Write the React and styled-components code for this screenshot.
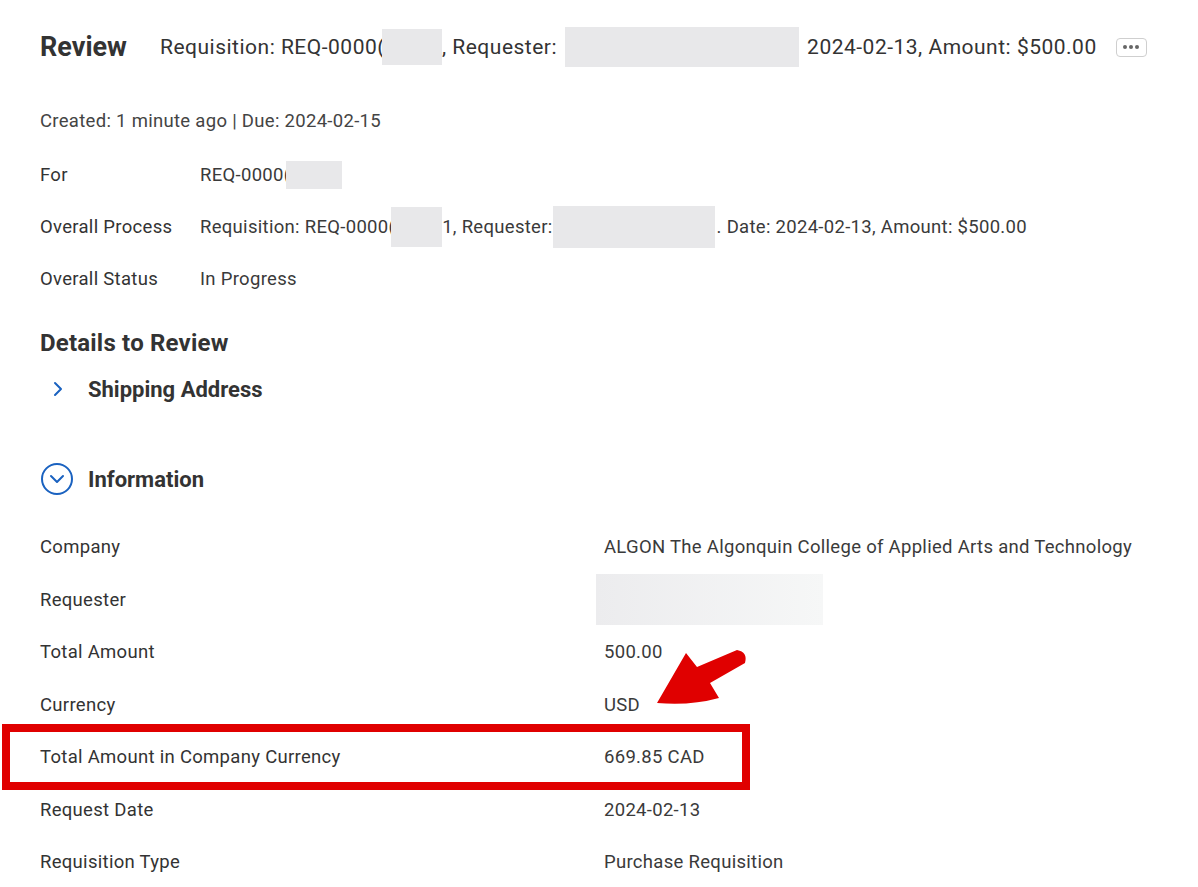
import styled, { createGlobalStyle } from "styled-components";

const GlobalStyle = createGlobalStyle`
  html, body {
    margin: 0;
    padding: 0;
    background: #fff;
  }
  body {
    font-family: Roboto, "Noto Sans", Arial, sans-serif;
    color: #333;
  }
`;

const Page = styled.div`
  position: relative;
  width: 1198px;
  height: 887px;
  box-sizing: border-box;
  padding: 17px 0 0 40px;
  overflow: hidden;
`;

const Header = styled.div`
  display: flex;
  align-items: center;
  height: 60px;
`;

const Title = styled.h1`
  margin: 0 33px 0 0;
  font-size: 27px;
  font-weight: 700;
  color: #333;
`;

const Subtitle = styled.div`
  display: flex;
  align-items: center;
  font-size: 21px;
  letter-spacing: 0.5px;
  color: #333;
  white-space: nowrap;
`;

const Redact = styled.span`
  display: inline-block;
  flex: none;
  width: ${(p) => p.w}px;
  height: ${(p) => p.h}px;
  margin: 0 ${(p) => p.mr || 0}px 0 ${(p) => p.ml || 0}px;
  background: ${(p) =>
    p.fade ? "linear-gradient(90deg, #ececee 0%, #f6f7f7 100%)" : "#e8e8ea"};
`;

const MoreButton = styled.button`
  margin-left: 19px;
  width: 31px;
  height: 19px;
  border: 1px solid #cfcfcf;
  border-radius: 4px;
  background: #fff;
  display: flex;
  align-items: center;
  justify-content: center;
  gap: 2px;
  padding: 0;

  span {
    width: 4px;
    height: 4px;
    border-radius: 50%;
    background: #666;
  }
`;

const Meta = styled.div`
  margin-top: 34px;
  font-size: 18.5px;
  letter-spacing: 0.3px;
  line-height: 20px;
  color: #444;
`;

const FieldList = styled.div`
  margin-top: 18px;
`;

const Row = styled.div`
  display: grid;
  grid-template-columns: ${(p) => p.label}px 1fr;
  align-items: center;
  height: ${(p) => p.h || 52}px;
  font-size: 18.5px;
  letter-spacing: 0.3px;
  color: #333;
  white-space: nowrap;
`;

const Value = styled.div`
  display: flex;
  align-items: center;
  color: #3a3a3a;
`;

const SectionTitle = styled.h2`
  margin: 23px 0 0;
  font-size: 24px;
  letter-spacing: 0.2px;
  line-height: 30px;
  font-weight: 700;
  color: #333;
`;

const Toggle = styled.div`
  display: flex;
  align-items: center;
  height: 40px;
  margin-top: ${(p) => p.mt}px;
  font-size: 22px;
  font-weight: 700;
  color: #333;

  svg {
    flex: none;
  }
`;

const IconSlot = styled.span`
  width: 48px;
  display: flex;
  align-items: center;
  padding-left: ${(p) => p.pl}px;
  box-sizing: border-box;
`;

const InfoList = styled.div`
  margin-top: 22px;
`;

const Overlay = styled.svg`
  position: absolute;
  left: 0;
  top: 0;
  pointer-events: none;
`;

const info = [
  ["Company", "ALGON The Algonquin College of Applied Arts and Technology"],
  ["Requester", null],
  ["Total Amount", "500.00"],
  ["Currency", "USD"],
  ["Total Amount in Company Currency", "669.85 CAD"],
  ["Request Date", "2024-02-13"],
  ["Requisition Type", "Purchase Requisition"],
];

export default function App() {
  return (
    <Page>
      <GlobalStyle />
      <Header>
        <Title>Review</Title>
        <Subtitle>
          Requisition: REQ-0000(
          <Redact w={60} h={36} ml={-3} />, Requester:
          <Redact w={234} h={40} ml={8} mr={8} />
          2024-02-13, Amount: $500.00
        </Subtitle>
        <MoreButton aria-label="More">
          <span />
          <span />
          <span />
        </MoreButton>
      </Header>

      <Meta>Created: 1 minute ago | Due: 2024-02-15</Meta>

      <FieldList>
        <Row label={160}>
          <span>For</span>
          <Value>
            REQ-0000(
            <Redact w={56} h={28} ml={-4} />
          </Value>
        </Row>
        <Row label={160}>
          <span>Overall Process</span>
          <Value>
            Requisition: REQ-0000(
            <Redact w={51} h={40} ml={-4} />
            1, Requester:
            <Redact w={162} h={42} ml={0} mr={2} />
            . Date: 2024-02-13, Amount: $500.00
          </Value>
        </Row>
        <Row label={160}>
          <span>Overall Status</span>
          <Value>In Progress</Value>
        </Row>
      </FieldList>

      <SectionTitle>Details to Review</SectionTitle>

      <Toggle mt={11}>
        <IconSlot pl={12}>
          <svg width="12" height="18" viewBox="0 0 12 18">
            <path
              d="M3 3l6 6-6 6"
              fill="none"
              stroke="#1a62c0"
              strokeWidth="2"
              strokeLinecap="round"
              strokeLinejoin="round"
            />
          </svg>
        </IconSlot>
        Shipping Address
      </Toggle>

      <Toggle mt={50}>
        <IconSlot pl={0}>
          <svg width="34" height="34" viewBox="0 0 34 34">
            <circle cx="17" cy="17" r="15" fill="none" stroke="#1a62c0" strokeWidth="2" />
            <path
              d="M11 14l6 6 6-6"
              fill="none"
              stroke="#1a62c0"
              strokeWidth="2"
              strokeLinecap="round"
              strokeLinejoin="round"
            />
          </svg>
        </IconSlot>
        Information
      </Toggle>

      <InfoList>
        {info.map(([label, value]) => (
          <Row key={label} label={564} h={52.5}>
            <span>{label}</span>
            <Value>
              {value === null ? <Redact w={227} h={51} ml={-8} fade /> : value}
            </Value>
          </Row>
        ))}
      </InfoList>

      <Overlay width="1198" height="887" viewBox="0 0 1198 887">
        <rect x="6" y="728" width="740" height="58" fill="none" stroke="#e00000" strokeWidth="8" />
        <path
          d="M657 703 L686 653 L697 667 L737 650 Q748 652 745 663 L710 683 L719 698 Q690 706 657 703 Z"
          fill="#e00000"
        />
      </Overlay>
    </Page>
  );
}
